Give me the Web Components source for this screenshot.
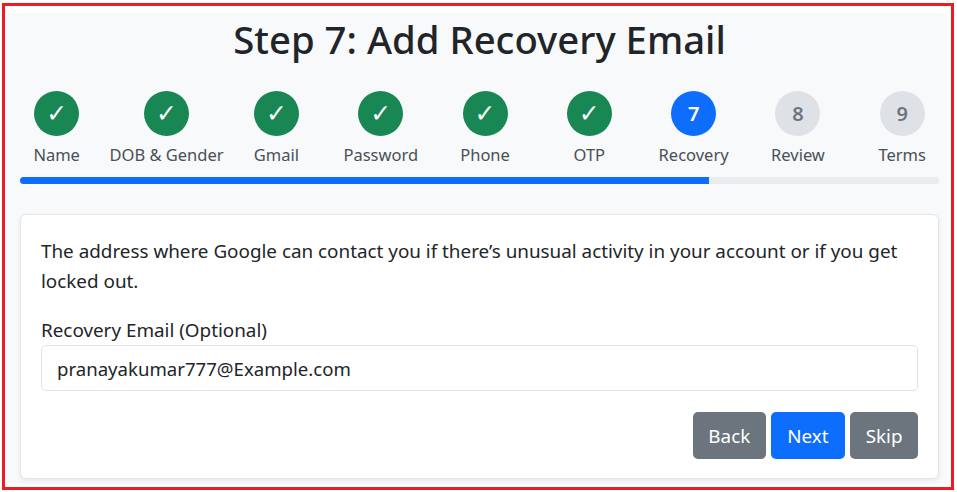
<!DOCTYPE html>
<html lang="en">
<head>
<meta charset="utf-8">
<title>Step 7: Add Recovery Email</title>
<style>
  html, body { margin: 0; height: 492px; overflow: hidden; background: #fff; }
  body { font-family: "Noto Sans", "Open Sans", sans-serif; color: #212529; }
</style>
</head>
<body>
<signup-page>
  <h1 slot="title">Step 7: Add Recovery Email</h1>
  <step-item slot="steps" state="done" label="Name"></step-item>
  <step-item slot="steps" state="done" label="DOB &amp; Gender" wide></step-item>
  <step-item slot="steps" state="done" label="Gmail"></step-item>
  <step-item slot="steps" state="done" label="Password"></step-item>
  <step-item slot="steps" state="done" label="Phone"></step-item>
  <step-item slot="steps" state="done" label="OTP"></step-item>
  <step-item slot="steps" state="active" num="7" label="Recovery"></step-item>
  <step-item slot="steps" num="8" label="Review"></step-item>
  <step-item slot="steps" num="9" label="Terms"></step-item>
  <progress-bar slot="progress" value="75"></progress-bar>
  <form-card slot="card">
    <span slot="text">The address where Google can contact you if there’s unusual activity in your account or if you get locked out.</span>
    <text-field slot="field" label="Recovery Email (Optional)" value="pranayakumar777@Example.com"></text-field>
    <ui-button slot="actions" kind="secondary">Back</ui-button>
    <ui-button slot="actions" kind="primary">Next</ui-button>
    <ui-button slot="actions" kind="secondary">Skip</ui-button>
  </form-card>
</signup-page>

<script>
class SignupPage extends HTMLElement {
  constructor() {
    super();
    this.attachShadow({ mode: "open" });
    this.shadowRoot.innerHTML = `
      <style>
        :host { display: block; box-sizing: border-box; margin: 3px 2px 0; width: 952px; height: 487px;
                border: 3px solid #ed1c24; padding: 7px 4px 3px 2px; background: #fff; }
        .Inner { height: 100%; background: #f8f9fa; display: flex; flex-direction: column; }
        .Title { text-align: center; height: 52px; padding-left: 5px; }
        ::slotted(h1) { margin: 0; font-size: 38.3px; font-weight: 500; line-height: 52px; color: #212529; }
        .Steps { display: flex; margin-top: 26px; margin-left: -2.5px; }
        .Body { padding: 0 8px 0 13px; display: flex; flex-direction: column; }
        .Progress { margin-top: 8px; }
        .Card { margin-top: 30px; }
      </style>
      <div class="Inner">
        <div class="Title"><slot name="title"></slot></div>
        <div class="Steps"><slot name="steps"></slot></div>
        <div class="Body">
          <div class="Progress"><slot name="progress"></slot></div>
          <div class="Card"><slot name="card"></slot></div>
        </div>
      </div>`;
  }
}

class StepItem extends HTMLElement {
  constructor() {
    super();
    this.attachShadow({ mode: "open" });
  }
  connectedCallback() {
    const state = this.getAttribute("state") || "todo";
    const mark = state === "done" ? "✓" : this.getAttribute("num");
    this.shadowRoot.innerHTML = `
      <style>
        :host { display: flex; flex-direction: column; align-items: center; flex: 0 0 104.3px; white-space: nowrap; }
        :host([wide]) { flex-basis: 115.5px; }
        .Dot { width: 45px; height: 45px; border-radius: 50%; display: flex; align-items: center; justify-content: center;
               font-size: 20px; font-weight: 600; }
        .done { background: #198754; color: #fff; font-family: "DejaVu Sans", sans-serif; font-size: 25px; font-weight: 700; }
        .active { background: #0d6efd; color: #fff; }
        .todo { background: #dee2e6; color: #6c757d; }
        .Label { margin-top: 5px; font-size: 16.5px; line-height: 28px; color: #495057; }
      </style>
      <div class="Dot ${state}">${mark}</div>
      <div class="Label">${this.getAttribute("label")}</div>`;
  }
}

class ProgressBar extends HTMLElement {
  constructor() {
    super();
    this.attachShadow({ mode: "open" });
  }
  connectedCallback() {
    this.shadowRoot.innerHTML = `
      <style>
        :host { display: block; height: 7px; border-radius: 4px; background: #e9ecef; overflow: hidden; }
        .Fill { height: 100%; background: #0d6efd; width: ${this.getAttribute("value")}%; }
      </style>
      <div class="Fill"></div>`;
  }
}

class FormCard extends HTMLElement {
  constructor() {
    super();
    this.attachShadow({ mode: "open" });
    this.shadowRoot.innerHTML = `
      <style>
        :host { display: block; box-sizing: border-box; height: 265px; padding: 21px 20px; background: #fff;
                border: 1px solid #e3e6e8; border-radius: 6px; box-shadow: 0 2px 5px rgba(0,0,0,.07); }
        .Text { font-size: 18.85px; line-height: 30px; color: #212529; }
        .Field { margin-top: 19px; }
        .Actions { display: flex; justify-content: flex-end; gap: 5px; margin-top: 21px; }
      </style>
      <div class="Text"><slot name="text"></slot></div>
      <div class="Field"><slot name="field"></slot></div>
      <div class="Actions"><slot name="actions"></slot></div>`;
  }
}

class TextField extends HTMLElement {
  constructor() {
    super();
    this.attachShadow({ mode: "open" });
  }
  connectedCallback() {
    this.shadowRoot.innerHTML = `
      <style>
        :host { display: block; }
        label { display: block; font-size: 18.85px; line-height: 30px; color: #212529; }
        .Input { box-sizing: border-box; height: 46px; border: 1px solid #dee2e6; border-radius: 5px; padding: 0 15px;
                 font-size: 18.6px; line-height: 46px; color: #212529; background: #fff; }
      </style>
      <label>${this.getAttribute("label")}</label>
      <div class="Input">${this.getAttribute("value")}</div>`;
  }
}

class UiButton extends HTMLElement {
  constructor() {
    super();
    this.attachShadow({ mode: "open" });
  }
  connectedCallback() {
    const bg = this.getAttribute("kind") === "primary" ? "#0d6efd" : "#6c757d";
    this.shadowRoot.innerHTML = `
      <style>
        :host { display: block; height: 47px; padding: 0 15.5px; border-radius: 5px; background: ${bg}; color: #fff;
                font-size: 18.85px; line-height: 49px; }
        :host([kind="primary"]) { padding: 0 16.5px; }
      </style>
      <slot></slot>`;
  }
}

customElements.define("signup-page", SignupPage);
customElements.define("step-item", StepItem);
customElements.define("progress-bar", ProgressBar);
customElements.define("form-card", FormCard);
customElements.define("text-field", TextField);
customElements.define("ui-button", UiButton);
</script>
</body>
</html>
